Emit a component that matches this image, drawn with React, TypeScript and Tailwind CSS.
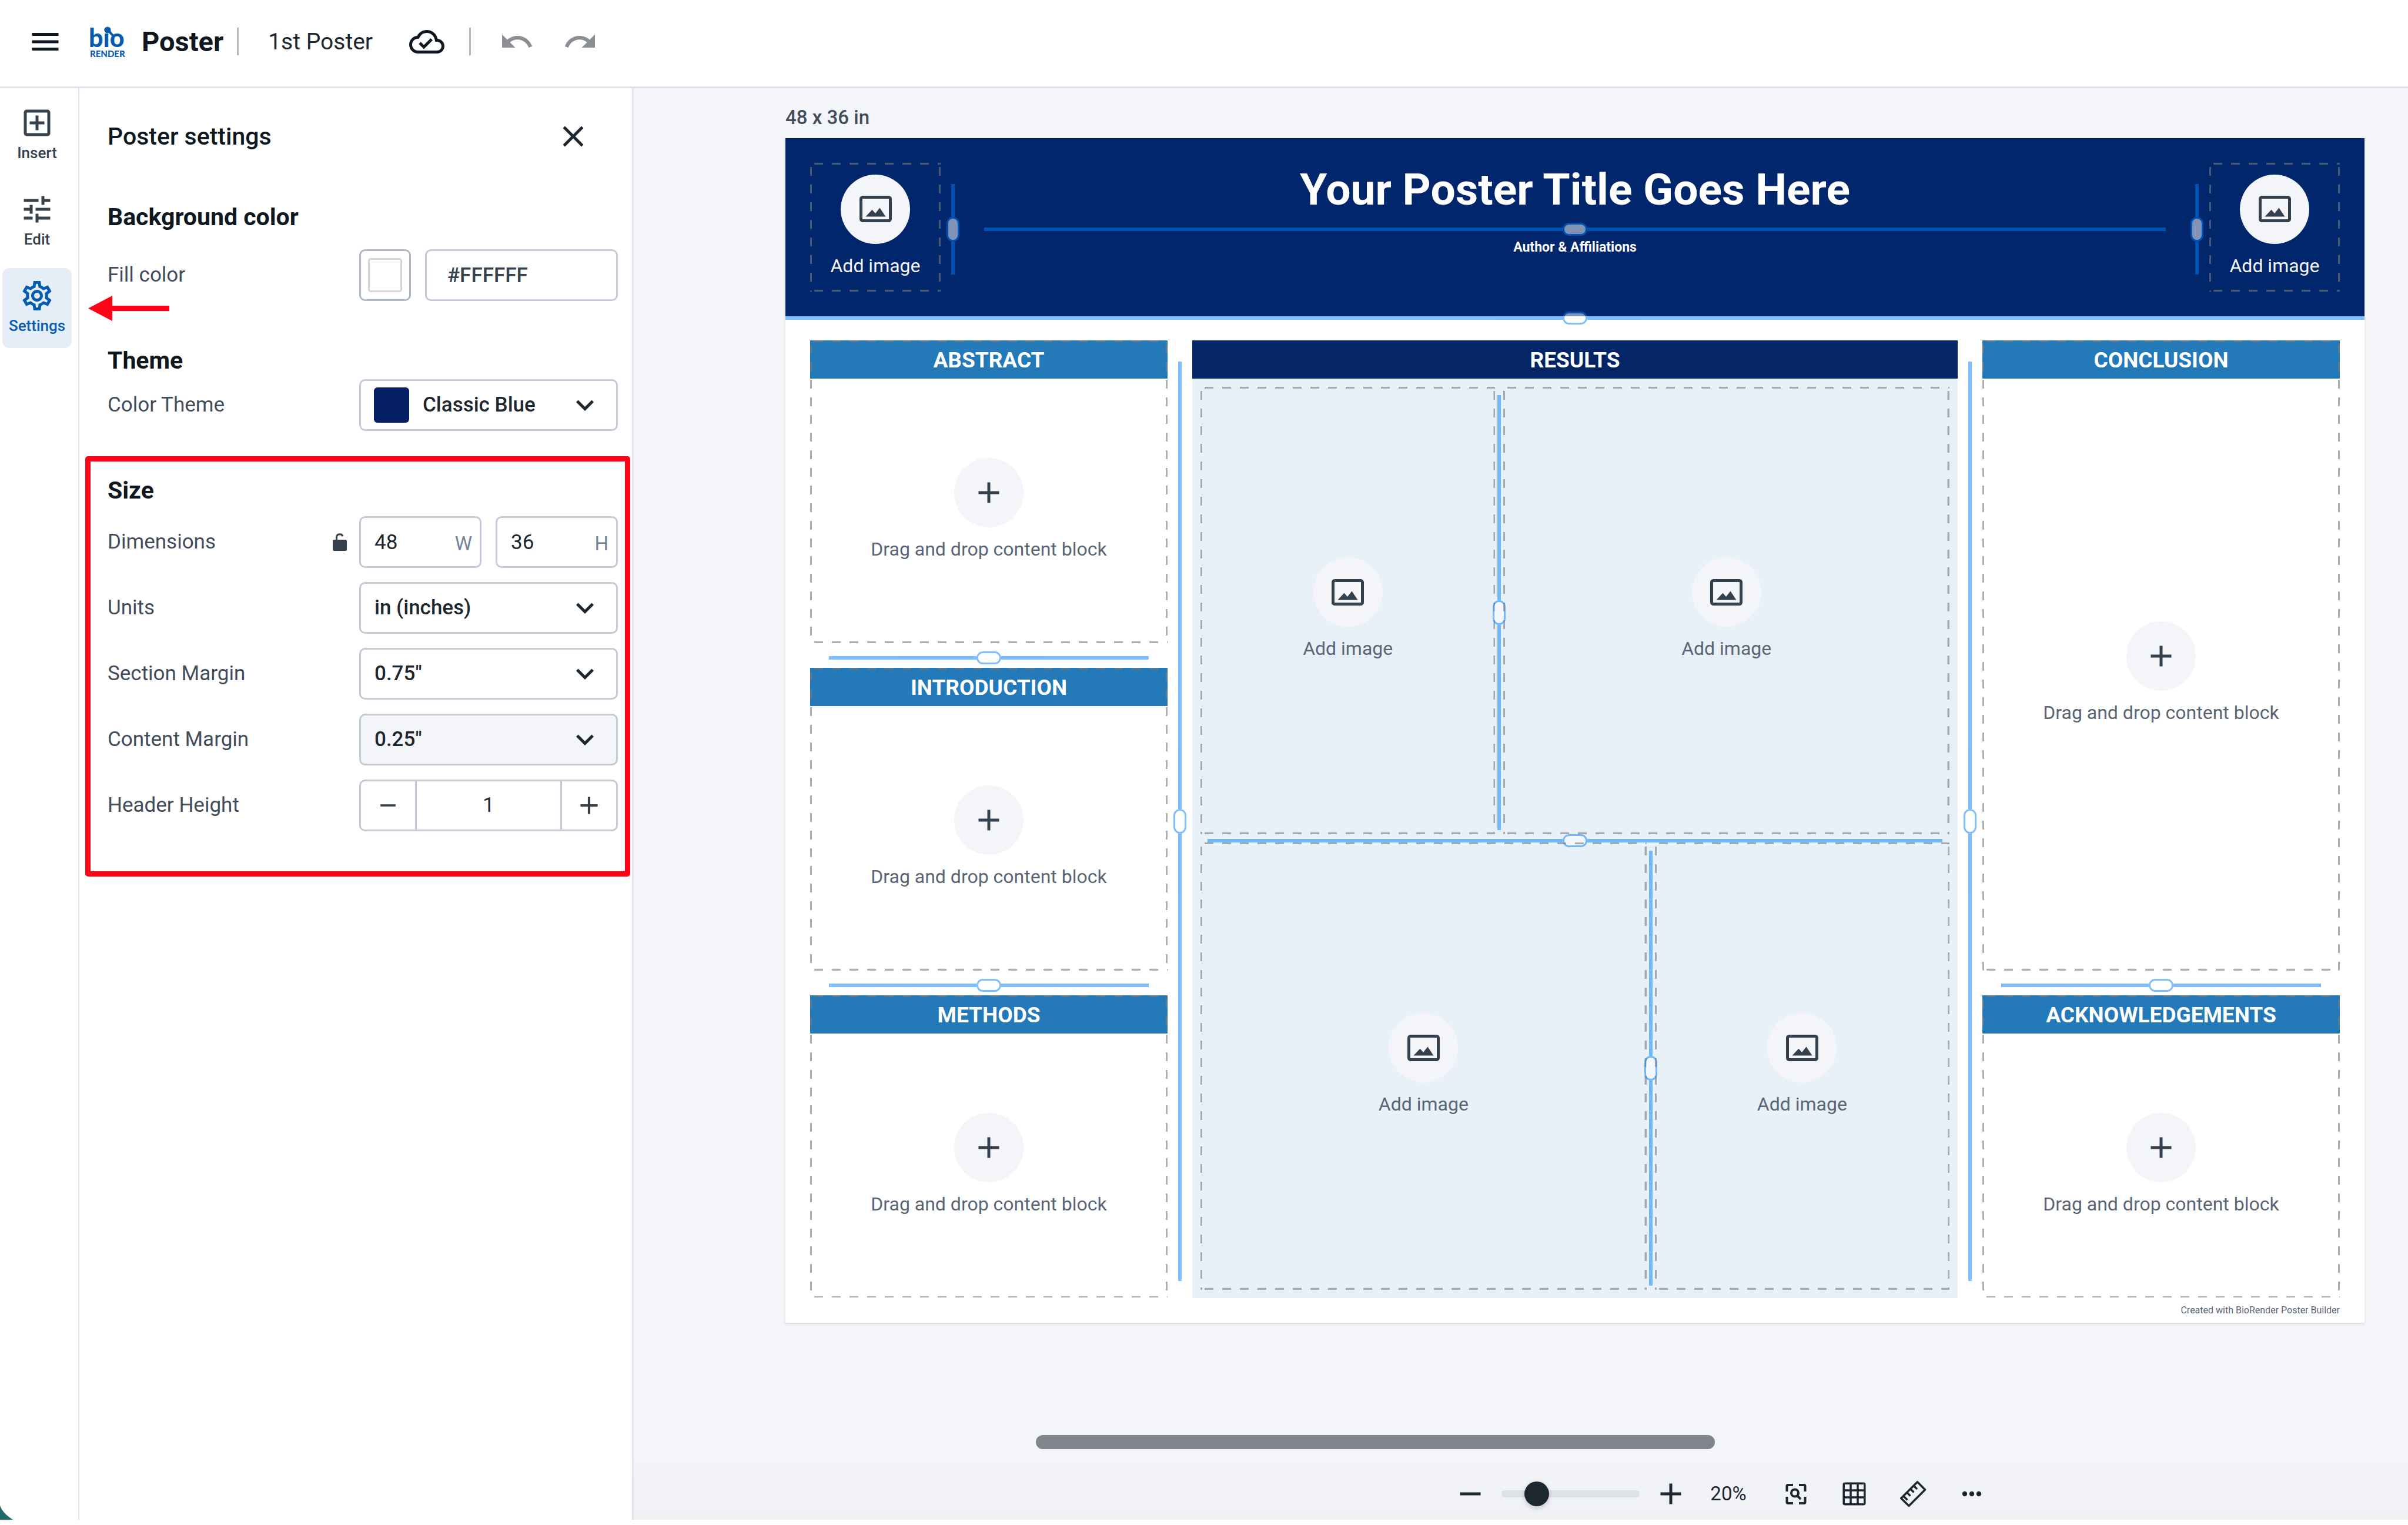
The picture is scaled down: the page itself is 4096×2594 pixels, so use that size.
import { useState } from 'react';
import { clsx } from 'clsx';
import {
  MdAdd,
  MdClose,
  MdExpandMore,
  MdMenu,
  MdOutlineAddBox,
  MdOutlineCloudDone,
  MdOutlineSettings,
  MdRedo,
  MdRemove,
  MdTune,
  MdUndo,
} from 'react-icons/md';

const icon = 'size-[60px] shrink-0';

/* ---------- Icons ---------- */

function Logo() {
  return (
    <svg viewBox="-4 -10 70 70" className="size-[70px] shrink-0" fill="#085cb0" aria-label="BioRender">
      <text x="-2" y="34" fontFamily="Lato, sans-serif" fontWeight="900" fontSize="43">
        bio
      </text>
      <circle cx="30" cy="5" r="5.500" />
      <path d="M26 8 L34 3 L36 8 L42 15 L39 17 L32 10 Z" />
      <text x="0" y="51" fontFamily="Lato, sans-serif" fontWeight="900" fontSize="15">
        RENDER
      </text>
    </svg>
  );
}

function ImageIcon() {
  return (
    <svg viewBox="0 0 22 18" className="w-[55px] h-[45px]" fill="none">
      <rect x="1" y="1" width="20" height="16" rx="1.2" stroke="#35404d" strokeWidth="2" />
      <path d="M4.2 14.2 8.6 9.5 10.8 12 13.8 8.2 17.8 14.2Z" fill="#35404d" />
    </svg>
  );
}

function UnlockIcon() {
  return (
    <svg viewBox="0 0 24 30" className="w-6 h-[30px]" fill="none">
      <rect x="0" y="11" width="24" height="19" rx="2.5" fill="#35404d" />
      <path d="M6.5 12V7a5.5 5.5 0 0 1 10.6-1.8" stroke="#35404d" strokeWidth="3" />
    </svg>
  );
}

function FitIcon() {
  return (
    <svg viewBox="0 0 60 60" className={icon} fill="none" stroke="currentColor" strokeWidth="4">
      <path d="M15.500 26V17a2 2 0 0 1 2-2H26M36 15h8.500a2 2 0 0 1 2 2V26M46.500 35v9a2 2 0 0 1-2 2H36M26 46h-8.500a2 2 0 0 1-2-2V35" />
      <circle cx="29" cy="28.500" r="6" />
      <path d="M33 33l6 6" />
    </svg>
  );
}

function GridIcon() {
  return (
    <svg viewBox="0 0 60 60" className={icon} fill="none" stroke="currentColor" strokeWidth="3.500">
      <rect x="12.200" y="12.200" width="35.600" height="35.600" rx="2" />
      <path d="M24 12v36M36 12v36M12 24h36M12 36h36" />
    </svg>
  );
}

function RulerIcon() {
  return (
    <svg viewBox="0 0 60 60" className={icon} fill="none" stroke="currentColor" strokeWidth="3.500" strokeLinejoin="round">
      <path d="M9.800 37.500 37.500 9.800 50.500 23 23 50.500Z" />
      <path d="M13.500 33.500l7 7M19.500 27.500l6 6M25.500 21.500l6 6M31 16l6 6" />
    </svg>
  );
}

function DotsIcon() {
  return (
    <svg viewBox="0 0 60 60" className={icon} fill="currentColor">
      <circle cx="18" cy="30" r="4.200" />
      <circle cx="30" cy="30" r="4.200" />
      <circle cx="42" cy="30" r="4.200" />
    </svg>
  );
}

/* ---------- Top bar and tool rail ---------- */

function TopBar() {
  return (
    <header className="flex items-center h-[150px] shrink-0 border-b-[3px] border-[#dfe3eb] bg-white pl-[47px] pb-[6px] text-[#0f1820]">
      <button aria-label="Menu">
        <MdMenu className={icon} />
      </button>
      <a href="#home" className="flex items-center gap-[22px] ml-[42px]">
        <Logo />
        <span className="text-[47px] leading-[60px] font-bold">Poster</span>
      </a>
      <span className="w-[3px] h-[47px] ml-[23px] bg-[#b5b7bb]" />
      <button className="ml-[50px] text-[39px] leading-[60px] text-[#1d2730]">1st Poster</button>
      <MdOutlineCloudDone className="size-[60px] shrink-0 ml-[62px]" />
      <span className="w-[3px] h-[47px] ml-[42px] bg-[#b5b7bb]" />
      <div className="flex gap-[48px] ml-[48px] text-[#8b8f94]">
        <button aria-label="Undo">
          <MdUndo className={icon} />
        </button>
        <button aria-label="Redo">
          <MdRedo className={icon} />
        </button>
      </div>
    </header>
  );
}

const tools = [
  { label: 'Insert', Icon: MdOutlineAddBox },
  { label: 'Edit', Icon: MdTune },
  { label: 'Settings', Icon: MdOutlineSettings },
];

function ToolRail() {
  return (
    <nav className="relative z-10 flex flex-col gap-[11px] w-[135px] shrink-0 border-r-2 border-[#dfe3eb] pt-[12px] pl-[4px]">
      {tools.map(({ label, Icon }) => {
        const active = label === 'Settings';
        return (
          <button
            key={label}
            className={clsx(
              'relative flex flex-col items-center w-[118px] h-[136px] pt-[17px] gap-[5px] rounded-[12px]',
              active ? 'bg-[#e5edf6] text-[#085cb0]' : 'text-[#35404d]',
            )}
          >
            <Icon className={icon} />
            <span className="text-[26px] leading-[32px] font-medium">{label}</span>
            {active && (
              <svg viewBox="0 0 138 43" className="absolute left-[146px] top-[47px] w-[138px] h-[43px]" fill="#ff0218">
                <path d="M0 21.500 41 0V17H138V26H41V43Z" />
              </svg>
            )}
          </button>
        );
      })}
    </nav>
  );
}

/* ---------- Settings panel ---------- */

const field = 'h-[88px] rounded-[10px] border-[3px] border-[#c3cbd8] text-[35px] text-[#1d2730]';

function Heading({ children }: { children: React.ReactNode }) {
  return <h3 className="text-[41px] leading-[48px] font-bold text-[#0f1820]">{children}</h3>;
}

function Row({ label, htmlFor, children }: { label: string; htmlFor: string; children: React.ReactNode }) {
  return (
    <div className="flex items-center h-[88px]">
      <label htmlFor={htmlFor} className="flex-1 text-[35px] leading-[48px] text-[#424d5b]">
        {label}
      </label>
      {children}
    </div>
  );
}

interface SelectFieldProps {
  id: string;
  options: string[];
  swatch?: boolean;
  muted?: boolean;
}

function SelectField({ id, options, swatch, muted }: SelectFieldProps) {
  return (
    <div className="relative w-[440px]">
      <select
        id={id}
        className={clsx(
          field,
          'w-full appearance-none font-medium',
          swatch ? 'pl-[105px]' : 'pl-[23px]',
          muted ? 'bg-[#f4f5f9]' : 'bg-white',
        )}
      >
        {options.map((o) => (
          <option key={o}>{o}</option>
        ))}
      </select>
      {swatch && <span className="absolute left-[25px] top-[14px] size-[60px] rounded-[6px] bg-[#031e62]" />}
      <MdExpandMore className="absolute right-[26px] top-[14px] size-[60px] text-[#1d2730] pointer-events-none" />
    </div>
  );
}

function SizeInput({ id, unit, value, label }: { id: string; unit: string; value: string; label: string }) {
  return (
    <div className="relative w-[208px]">
      <input id={id} aria-label={label} defaultValue={value} className={clsx(field, 'w-full pl-[23px] border-[#b9c2cf]')} />
      <span className="absolute right-[16px] top-[25px] text-[33px] leading-[44px] text-[#74839a]">{unit}</span>
    </div>
  );
}

function SettingsPanel() {
  const [height, setHeight] = useState(1);

  return (
    <aside className="w-[943px] shrink-0 border-r-[3px] border-[#dfe3eb] pt-[52px] pl-[48px] pr-[24px]">
      <div className="flex items-center justify-between pr-[46px] mb-[83px]">
        <h2 className="text-[41px] leading-[60px] font-medium text-[#0f1820]">Poster settings</h2>
        <button aria-label="Close">
          <MdClose className="size-[60px] text-[#1d2730]" />
        </button>
      </div>

      <section className="mb-[77px]">
        <Heading>Background color</Heading>
        <div className="mt-[31px]">
          <Row label="Fill color" htmlFor="fill">
            <button
              aria-label="Pick fill color"
              className="flex items-center justify-center size-[88px] mr-[24px] rounded-[10px] border-[3px] border-[#b0bac8]"
            >
              <span className="size-[58px] rounded-[5px] border-[3px] border-[#d4d4d4]" />
            </button>
            <input
              id="fill"
              defaultValue="#FFFFFF"
              className={clsx(field, 'w-[328px] pl-[35px] font-medium text-[#35404d] border-[#b9c2cf]')}
            />
          </Row>
        </div>
      </section>

      <section className="mb-[77px]">
        <Heading>Theme</Heading>
        <div className="mt-[8px]">
          <Row label="Color Theme" htmlFor="theme">
            <SelectField id="theme" options={['Classic Blue']} swatch />
          </Row>
        </div>
      </section>

      <section className="relative">
        <Heading>Size</Heading>
        <div className="flex flex-col gap-[24px] mt-[20px]">
          <Row label="Dimensions" htmlFor="dim-w">
            <button aria-label="Lock proportions" className="mr-[21px]">
              <UnlockIcon />
            </button>
            <div className="flex gap-[24px]">
              <SizeInput id="dim-w" label="Width" unit="W" value="48" />
              <SizeInput id="dim-h" label="Height" unit="H" value="36" />
            </div>
          </Row>
          <Row label="Units" htmlFor="units">
            <SelectField id="units" options={['in (inches)', 'cm (centimeters)']} />
          </Row>
          <Row label="Section Margin" htmlFor="section-margin">
            <SelectField id="section-margin" options={['0.75"', '1"']} />
          </Row>
          <Row label="Content Margin" htmlFor="content-margin">
            <SelectField id="content-margin" options={['0.25"', '0.5"']} muted />
          </Row>
          <Row label="Header Height" htmlFor="header-height">
            <div className={clsx(field, 'flex w-[440px]')}>
              <button aria-label="Decrease" className="flex items-center justify-center w-[92px]" onClick={() => setHeight(height - 1)}>
                <MdRemove className="size-[44px] text-[#35404d]" />
              </button>
              <input
                id="header-height"
                value={height}
                onChange={(e) => setHeight(Number(e.target.value))}
                className="flex-1 min-w-0 border-x-[3px] border-[#c3cbd8] text-center"
              />
              <button aria-label="Increase" className="flex items-center justify-center w-[92px]" onClick={() => setHeight(height + 1)}>
                <MdAdd className="size-[50px] text-[#35404d]" />
              </button>
            </div>
          </Row>
        </div>
        <div className="absolute -top-[34px] -bottom-[77px] -left-[38px] -right-[21px] rounded-[5px] border-[9px] border-[#ff0218] pointer-events-none" />
      </section>
    </aside>
  );
}

/* ---------- Poster ---------- */

function Divider({ vertical, className }: { vertical?: boolean; className?: string }) {
  return (
    <div className={clsx('flex items-center justify-center opacity-50', vertical ? 'flex-col w-[6px]' : 'h-[6px]', className)}>
      <span className={clsx('flex-1 bg-[#007fff]', vertical ? 'w-[6px]' : 'h-[6px]')} />
      <span
        className={clsx('shrink-0 rounded-full border-[3px] border-[#007fff] bg-white', vertical ? 'w-[22px] h-[42px]' : 'w-[42px] h-[22px]')}
      />
      <span className={clsx('flex-1 bg-[#007fff]', vertical ? 'w-[6px]' : 'h-[6px]')} />
    </div>
  );
}

function DashedOutline() {
  const edges = [
    ['0', '0', '100%', '0'],
    ['0', '100%', '100%', '100%'],
    ['0', '0', '0', '100%'],
    ['100%', '0', '100%', '100%'],
  ];
  return (
    <svg className="absolute inset-0 size-full pointer-events-none opacity-60" stroke="#7a7a7a" strokeWidth="6">
      {edges.map(([x1, y1, x2, y2]) => (
        <line key={x1 + y1 + x2 + y2} x1={x1} y1={y1} x2={x2} y2={y2} strokeDasharray="15 15" strokeDashoffset="-7" />
      ))}
    </svg>
  );
}

function Placeholder({ kind, light }: { kind: 'image' | 'block'; light?: boolean }) {
  return (
    <button className="flex flex-col items-center">
      <span className="flex items-center justify-center size-[118px] rounded-full bg-[#f4f5f9]">
        {kind === 'image' ? <ImageIcon /> : <MdAdd className="size-[60px] text-[#35404d]" />}
      </span>
      <span className={clsx('mt-[12px] text-[32px] leading-[50px] whitespace-nowrap', light ? 'text-[#f4f5f9]' : 'text-[#5a6675]')}>
        {kind === 'image' ? 'Add image' : 'Drag and drop content block'}
      </span>
    </button>
  );
}

function ImageCell({ light, className }: { light?: boolean; className?: string }) {
  return (
    <div className={clsx('relative flex items-center justify-center', className)}>
      <Placeholder kind="image" light={light} />
      <DashedOutline />
    </div>
  );
}

function SectionTitle({ children, className }: { children: string; className: string }) {
  return (
    <h4 className={clsx('h-[65px] shrink-0 text-center text-[37px] leading-[68px] font-bold text-white', className)}>{children}</h4>
  );
}

function Section({ title, className }: { title: string; className?: string }) {
  return (
    <section className={clsx('relative flex flex-col min-h-0', className)}>
      <SectionTitle className="bg-[#247ab8]">{title}</SectionTitle>
      <div className="flex flex-1 items-center justify-center">
        <Placeholder kind="block" />
      </div>
      <DashedOutline />
    </section>
  );
}

// horizontal gutter between two stacked sections
function Gutter() {
  return (
    <div className="flex items-center pt-[8px] px-[32px]">
      <Divider className="w-full" />
    </div>
  );
}

function ColumnGutter() {
  return (
    <div className="flex justify-center pt-[36px] pb-[29px]">
      <Divider vertical />
    </div>
  );
}

function Results() {
  return (
    <section className="flex flex-col bg-[#e8f0f8]">
      <SectionTitle className="bg-[#042666]">RESULTS</SectionTitle>
      <div className="grid flex-1 grid-rows-[1fr_14px_1fr] p-[14px]">
        <div className="grid grid-cols-[501fr_14px_758fr]">
          <ImageCell />
          <div className="flex justify-center pt-[14px] pb-[7px]">
            <Divider vertical />
          </div>
          <ImageCell />
        </div>
        <div className="flex items-center pt-[8px] px-[12px]">
          <Divider className="w-full" />
        </div>
        <div className="grid grid-cols-[758fr_14px_501fr]">
          <ImageCell />
          <div className="flex justify-center pt-[14px] pb-[7px]">
            <Divider vertical />
          </div>
          <ImageCell />
        </div>
      </div>
    </section>
  );
}

function Poster() {
  return (
    <article className="flex flex-col aspect-[4/3] bg-white shadow-[0_2px_4px_rgba(30,40,60,0.12)]">
      <div className="relative grid grid-cols-[222px_42px_1fr_42px_222px] h-[303px] shrink-0 bg-[#01266b] p-[42px]">
        <ImageCell light />
        <Divider vertical className="mx-auto mt-[36px] h-[154px]" />
        <div className="px-[32px] text-center font-bold text-white">
          <h1 className="text-[75px] leading-[90px]">Your Poster Title Goes Here</h1>
          <Divider className="mt-[20px]" />
          <p className="mt-[12px] text-[23px] leading-[32px]">Author &amp; Affiliations</p>
        </div>
        <Divider vertical className="mx-auto mt-[36px] h-[154px]" />
        <ImageCell light />
        <Divider className="absolute inset-x-0 -bottom-[6px]" />
      </div>

      <div className="grid flex-1 min-h-0 grid-cols-[608px_42px_1fr_42px_608px] px-[42px] pt-[41px]">
        <div className="grid grid-rows-[1fr_42px_1fr_42px_1fr]">
          <Section title="ABSTRACT" />
          <Gutter />
          <Section title="INTRODUCTION" />
          <Gutter />
          <Section title="METHODS" />
        </div>
        <ColumnGutter />
        <Results />
        <ColumnGutter />
        <div className="grid grid-rows-[1fr_42px_1fr_42px_1fr]">
          <Section title="CONCLUSION" className="row-span-3" />
          <Gutter />
          <Section title="ACKNOWLEDGEMENTS" />
        </div>
      </div>

      <p className="pr-[42px] text-right text-[16px] leading-[42px] text-[#5a6675]">Created with BioRender Poster Builder</p>
    </article>
  );
}

/* ---------- Canvas ---------- */

function ZoomBar() {
  const [zoom, setZoom] = useState(20);

  return (
    <div className="flex items-center justify-end h-[60px] mt-[46px] pr-[712px] text-[#1d2730]">
      <button aria-label="Zoom out">
        <MdRemove className={icon} />
      </button>
      <input
        type="range"
        aria-label="Zoom"
        value={zoom}
        onChange={(e) => setZoom(Number(e.target.value))}
        className="appearance-none w-[235px] h-[42px] mx-[23px] bg-transparent [&::-webkit-slider-runnable-track]:h-[12px] [&::-webkit-slider-runnable-track]:rounded-[5px] [&::-webkit-slider-runnable-track]:bg-[#dde1ea] [&::-webkit-slider-thumb]:appearance-none [&::-webkit-slider-thumb]:size-[42px] [&::-webkit-slider-thumb]:-mt-[15px] [&::-webkit-slider-thumb]:rounded-full [&::-webkit-slider-thumb]:bg-[#1d2730] [&::-webkit-slider-thumb]:shadow-[0_3px_8px_rgba(0,0,0,0.2)]"
      />
      <button aria-label="Zoom in">
        <MdAdd className={icon} />
      </button>
      <output className="w-[136px] mr-[16px] text-center text-[33px] leading-[60px]">{zoom}%</output>
      <div className="flex gap-[40px]">
        <button aria-label="Fit to screen">
          <FitIcon />
        </button>
        <button aria-label="Grid">
          <GridIcon />
        </button>
        <button aria-label="Rulers">
          <RulerIcon />
        </button>
        <button aria-label="More">
          <DotsIcon />
        </button>
      </div>
    </div>
  );
}

function Canvas() {
  return (
    <main className="flex-1 min-w-0 bg-[#f4f5f9] pt-[30px] pb-[14px] bg-linear-to-t from-[#f0f1f5] to-[#f4f5f9] to-[120px]">
      <div className="pl-[258px] pr-[74px]">
        <p className="mb-[15px] text-[33px] leading-[40px] font-medium text-[#424d5b]">48 x 36 in</p>
        <Poster />
      </div>
      <div className="h-[24px] w-[1155px] mt-[191px] ml-[684px] rounded-[12px] bg-[#80848b]" />
      <ZoomBar />
    </main>
  );
}

export default function App() {
  return (
    <div className="relative flex flex-col min-h-screen bg-white font-[Roboto,sans-serif]">
      <TopBar />
      <div className="flex">
        <ToolRail />
        <SettingsPanel />
        <Canvas />
      </div>
      <svg viewBox="0 0 22 24" className="absolute left-0 bottom-[9px] w-[22px] h-[24px]">
        <path d="M0 0C3 9 11 17 22 24H0Z" fill="#22696a" />
      </svg>
    </div>
  );
}
